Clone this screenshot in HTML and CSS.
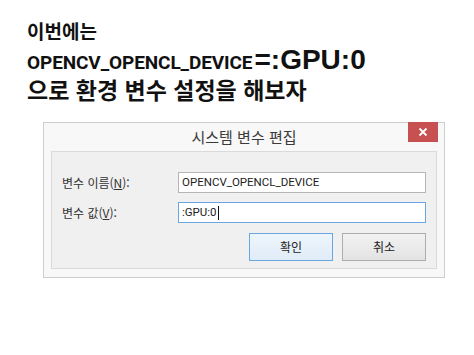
FILE: index.html
```html
<!DOCTYPE html>
<html lang="ko">
<head>
    <meta charset="UTF-8">
    <meta name="viewport" content="width=device-width, initial-scale=1.0">
    <title>OPENCV_OPENCL_DEVICE 설정</title>
    <link rel="stylesheet" href="styles.css">
</head>
<body>

    <!-- Slide heading -->
    <div class="heading">
        <p class="line1">이번에는</p>
        <p class="line2"><span class="env">OPENCV_OPENCL_DEVICE</span><span class="val">=:GPU:0</span></p>
        <p class="line3">으로 환경 변수 설정을 해보자</p>
    </div>

    <!-- Windows dialog -->
    <div class="dialog">
        <div class="titlebar">시스템 변수 편집</div>
        <div class="close">
            <svg width="10" height="10" viewBox="0 0 10 10">
                <path d="M1.5 1.5 L8.5 8.5 M8.5 1.5 L1.5 8.5" stroke="#fff" stroke-width="1.8"/>
            </svg>
        </div>

        <div class="panel">
            <div class="row">
                <span class="label">변수 이름(<u>N</u>):</span>
                <div class="field">OPENCV_OPENCL_DEVICE</div>
            </div>
            <div class="row">
                <span class="label">변수 값(<u>V</u>):</span>
                <div class="field focused">:GPU:0<span class="caret"></span></div>
            </div>
            <div class="buttons">
                <div class="btn default">확인</div>
                <div class="btn">취소</div>
            </div>
        </div>
    </div>

</body>
</html>
```

FILE: styles.css
```css
/* General */
body {
    margin: 0;
    background-color: #ffffff;
    color: #111;
    font-family: 'Noto Sans CJK KR', 'Noto Sans', sans-serif;
}

p {
    margin: 0;
}

/* Heading */
.heading {
    padding: 21px 0 0 27px;
    font-weight: bold;
}

.line1 {
    font-size: 19px;
    line-height: 20px;
}

.line2 {
    margin-top: 6px;
    height: 28px;
    line-height: 28px;
    white-space: nowrap;
}

.line2 .env {
    font-family: Roboto, 'Liberation Sans', sans-serif;
    font-size: 19px;
    letter-spacing: -0.1px;
}

.line2 .val {
    font-family: 'Liberation Sans', Arial, sans-serif;
    font-size: 28px;
    line-height: 26px;
    margin-left: 2px;
}

.line3 {
    margin-top: 2px;
    font-size: 23px;
    line-height: 24px;
}

/* Dialog */
.dialog {
    position: relative;
    margin: 21px 0 0 43px;
    width: 400px;
    height: 154px;
    border: 1px solid #cfcfcf;
    background-color: #f8f8f8;
    display: flex;
    flex-direction: column;
}

.titlebar {
    height: 28px;
    line-height: 28px;
    text-align: center;
    font-size: 15px;
    color: #3a3a3a;
}

.close {
    position: absolute;
    top: -1px;
    right: 6px;
    width: 30px;
    height: 20px;
    background-color: #c75050;
    display: flex;
    align-items: center;
    justify-content: center;
}

.panel {
    margin: 0 7px;
    height: 118px;
    border: 1px solid #dadada;
    background-color: #f0f0f0;
    padding: 20px 10px 0 10px;
    box-sizing: border-box;
    display: flex;
    flex-direction: column;
    gap: 9px;
}

.row {
    display: flex;
    align-items: center;
    height: 21px;
}

.label {
    width: 116px;
    font-size: 12px;
    color: #333;
}

.field {
    flex: 1;
    height: 21px;
    box-sizing: border-box;
    border: 1px solid #b5b5b5;
    background-color: #fff;
    padding-left: 3px;
    font-family: Roboto, 'Liberation Sans', sans-serif;
    font-size: 11.5px;
    line-height: 19px;
    color: #222;
    display: flex;
    align-items: center;
}

.field.focused {
    border-color: #6aa6e0;
}

.caret {
    display: inline-block;
    width: 1px;
    height: 14px;
    background-color: #111;
    margin-left: 1px;
}

.buttons {
    margin-top: 1px;
    display: flex;
    justify-content: flex-end;
    gap: 9px;
}

.btn {
    width: 84px;
    height: 28px;
    box-sizing: border-box;
    border: 1px solid #acacac;
    background: linear-gradient(#f2f2f2, #e3e3e3);
    font-size: 12px;
    line-height: 26px;
    text-align: center;
    color: #222;
}

.btn.default {
    border-color: #6aa6e0;
    background: linear-gradient(#eef5fc, #e0ecf8);
}
```
